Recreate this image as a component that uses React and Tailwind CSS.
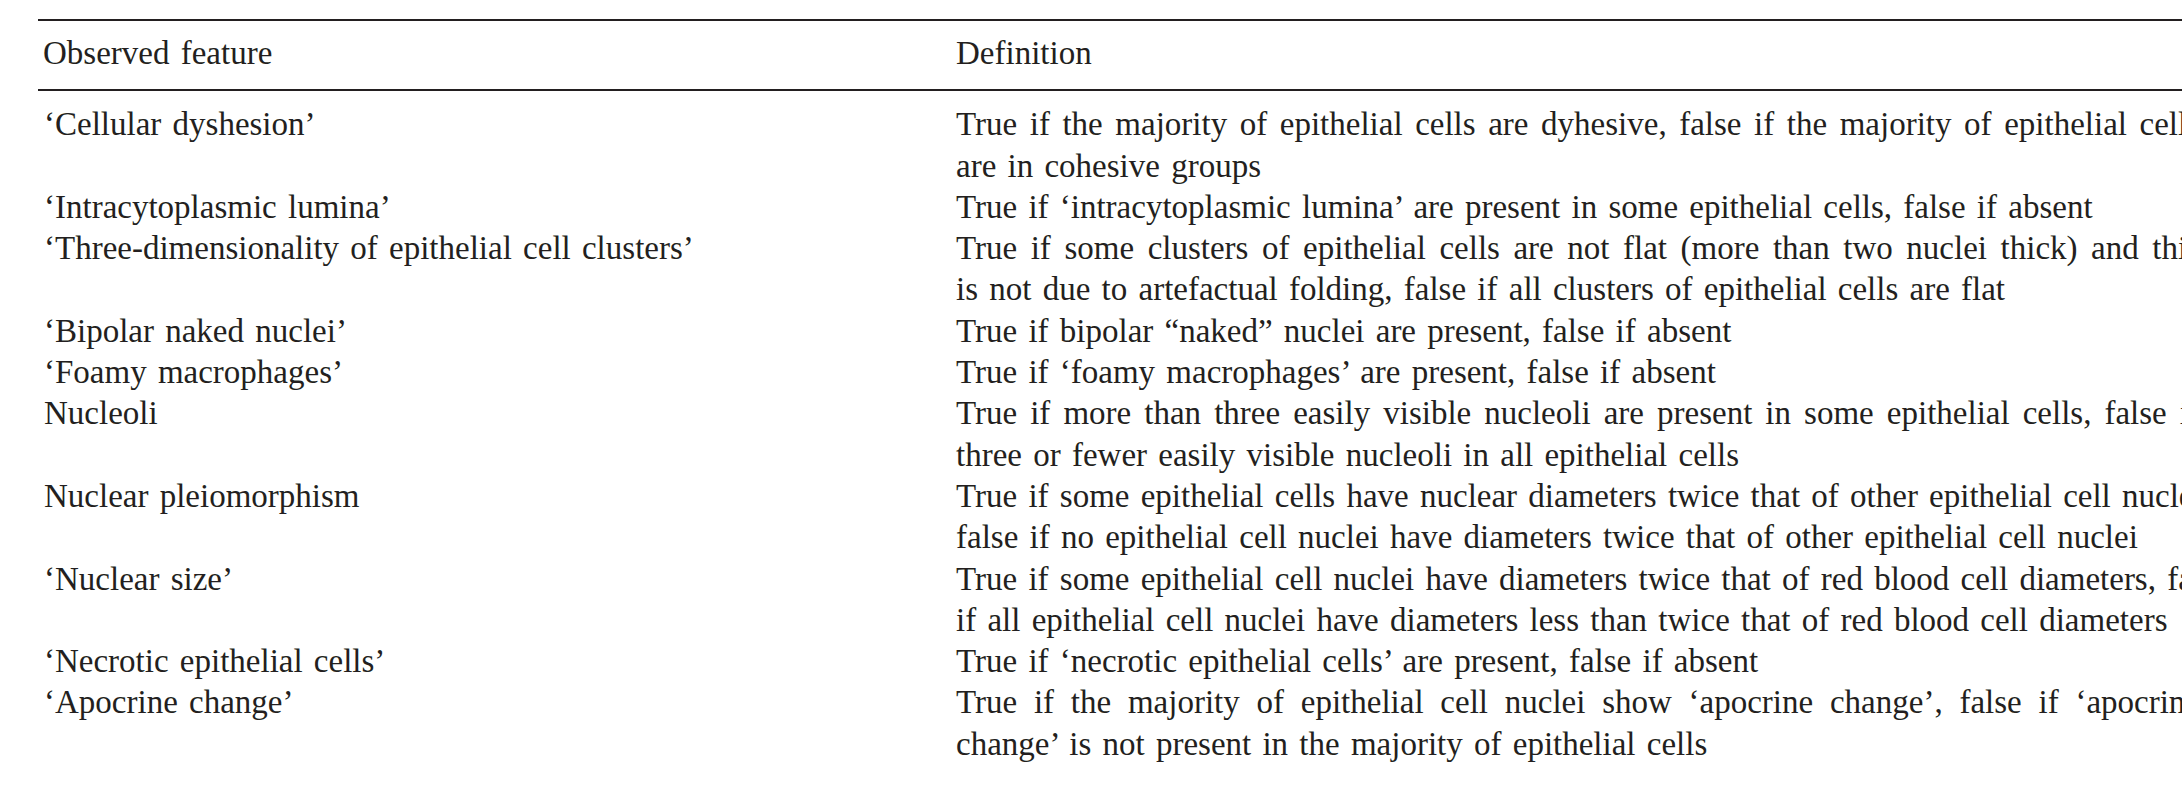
import React from 'react';

const rows = [
  {
    feature: '‘Cellular dyshesion’',
    lines: [
      'True if the majority of epithelial cells are dyhesive, false if the majority of epithelial cells',
      'are in cohesive groups',
    ],
  },
  {
    feature: '‘Intracytoplasmic lumina’',
    lines: ['True if ‘intracytoplasmic lumina’ are present in some epithelial cells, false if absent'],
  },
  {
    feature: '‘Three-dimensionality of epithelial cell clusters’',
    lines: [
      'True if some clusters of epithelial cells are not flat (more than two nuclei thick) and this',
      'is not due to artefactual folding, false if all clusters of epithelial cells are flat',
    ],
  },
  {
    feature: '‘Bipolar naked nuclei’',
    lines: ['True if bipolar “naked” nuclei are present, false if absent'],
  },
  {
    feature: '‘Foamy macrophages’',
    lines: ['True if ‘foamy macrophages’ are present, false if absent'],
  },
  {
    feature: 'Nucleoli',
    lines: [
      'True if more than three easily visible nucleoli are present in some epithelial cells, false if',
      'three or fewer easily visible nucleoli in all epithelial cells',
    ],
  },
  {
    feature: 'Nuclear pleiomorphism',
    lines: [
      'True if some epithelial cells have nuclear diameters twice that of other epithelial cell nuclei,',
      'false if no epithelial cell nuclei have diameters twice that of other epithelial cell nuclei',
    ],
  },
  {
    feature: '‘Nuclear size’',
    lines: [
      'True if some epithelial cell nuclei have diameters twice that of red blood cell diameters, false',
      'if all epithelial cell nuclei have diameters less than twice that of red blood cell diameters',
    ],
  },
  {
    feature: '‘Necrotic epithelial cells’',
    lines: ['True if ‘necrotic epithelial cells’ are present, false if absent'],
  },
  {
    feature: '‘Apocrine change’',
    lines: [
      'True if the majority of epithelial cell nuclei show ‘apocrine change’, false if ‘apocrine',
      'change’ is not present in the majority of epithelial cells',
    ],
  },
];

const App = () => {
  return (
    <div className="w-[2182px] h-[785px] overflow-hidden bg-white text-[#231f20] font-['Liberation_Serif','Times_New_Roman',serif] text-[33px] leading-[41.3px] [word-spacing:3px]">
      <div className="ml-[38px] w-[2200px] pt-[19px]">
        {/* header */}
        <div className="flex border-t-2 border-b-2 border-[#231f20] pt-[12px] pb-[15px]">
          <div className="w-[918px] shrink-0 pl-[5px]">Observed feature</div>
          <div>Definition</div>
        </div>

        {/* body */}
        <div className="pt-[13px]">
          {rows.map((row, i) => (
            <div key={i} className="flex">
              <div className="w-[918px] shrink-0 pl-[6px]">{row.feature}</div>
              <div className="w-[1244px] shrink-0">
                {row.lines.map((line, j) => (
                  <div
                    key={j}
                    className={
                      j < row.lines.length - 1
                        ? 'whitespace-nowrap text-justify [text-align-last:justify]'
                        : 'whitespace-nowrap'
                    }
                  >
                    {line}
                  </div>
                ))}
              </div>
            </div>
          ))}
        </div>
      </div>
    </div>
  );
};

export default App;
